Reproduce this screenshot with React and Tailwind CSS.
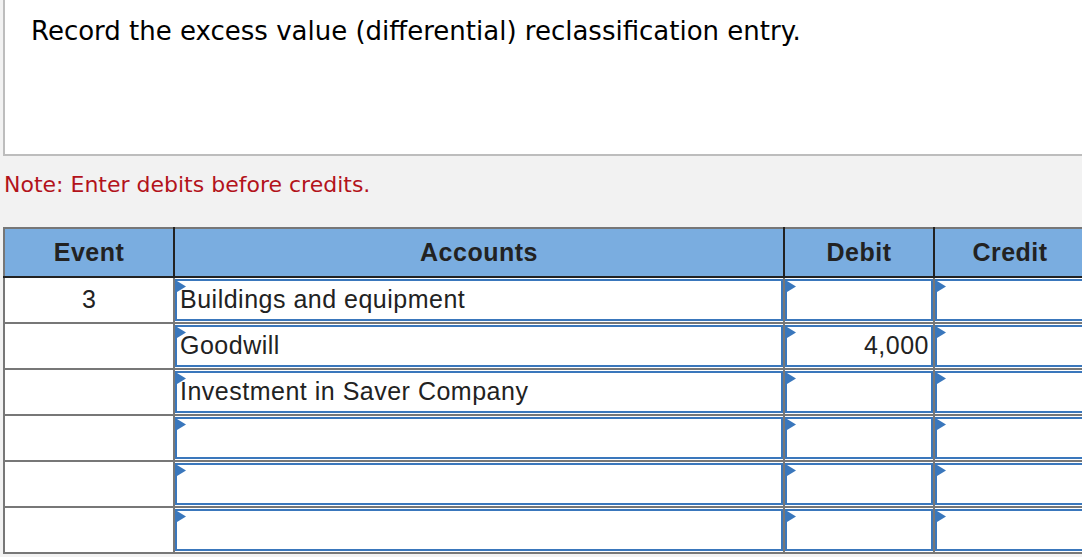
import React from 'react'

const rows = [
  { event: '3', account: 'Buildings and equipment', debit: '', credit: '' },
  { event: '', account: 'Goodwill', debit: '4,000', credit: '' },
  { event: '', account: 'Investment in Saver Company', debit: '', credit: '' },
  { event: '', account: '', debit: '', credit: '' },
  { event: '', account: '', debit: '', credit: '' },
  { event: '', account: '', debit: '', credit: '' },
]

function Field({ value, align = 'left' }) {
  return (
    <div className="relative h-[42px] border-2 border-[#3a77bc] bg-white flex items-center">
      {/* little dropdown marker */}
      <svg className="absolute left-0 top-0" width="9" height="11" viewBox="0 0 9 11">
        <polygon points="0,0 9,5.5 0,11" fill="#3a77bc" />
      </svg>
      <span
        className={
          align === 'right'
            ? 'w-full text-right pr-[2px] text-[25px] tracking-[0.5px] text-[#222]'
            : 'w-full text-left pl-[3px] text-[25px] tracking-[0.5px] text-[#222]'
        }
      >
        {value}
      </span>
    </div>
  )
}

export default function App() {
  return (
    <div className="min-h-screen w-[1082px] overflow-hidden bg-[#f2f2f2]" style={{ fontFamily: 'Verdana, "DejaVu Sans", sans-serif' }}>
      <div className="ml-[3px] w-[1100px] h-[156px] bg-white border-l-2 border-b-2 border-[#bdbdbd] pl-[26px] pt-[16px]">
        <p className="text-[26px] leading-[30px] text-black">
          Record the excess value (differential) reclassification entry.
        </p>
      </div>

      <p className="mt-[16px] ml-[4px] text-[22px] leading-[26px] text-[#b3131b]">
        Note: Enter debits before credits.
      </p>

      <table
        className="mt-[29px] ml-[3px] w-[1082px] border-collapse table-fixed"
        style={{ fontFamily: '"Liberation Sans", Arial, sans-serif' }}
      >
        <colgroup>
          <col className="w-[170px]" />
          <col className="w-[610px]" />
          <col className="w-[150px]" />
          <col className="w-[152px]" />
        </colgroup>
        <thead>
          <tr className="h-[49px] bg-[#7aade0] text-[25px] tracking-[0.5px] font-bold text-[#222]">
            <th className="border-2 border-[#777] border-r-[#222] border-b-[#222] text-center">Event</th>
            <th className="border-2 border-[#777] border-x-[#222] border-b-[#222] text-center">Accounts</th>
            <th className="border-2 border-[#777] border-x-[#222] border-b-[#222] text-center">Debit</th>
            <th className="border-2 border-[#777] border-l-[#222] border-b-[#222] text-center">Credit</th>
          </tr>
        </thead>
        <tbody>
          {rows.map((r, i) => (
            <tr key={i} className="h-[46px] bg-white">
              <td className="border-2 border-[#777] text-center text-[25px] text-[#222]">{r.event}</td>
              <td className="border-2 border-[#777] p-0">
                <Field value={r.account} />
              </td>
              <td className="border-2 border-[#777] p-0">
                <Field value={r.debit} align="right" />
              </td>
              <td className="border-2 border-[#777] p-0">
                <Field value={r.credit} align="right" />
              </td>
            </tr>
          ))}
        </tbody>
      </table>
    </div>
  )
}
